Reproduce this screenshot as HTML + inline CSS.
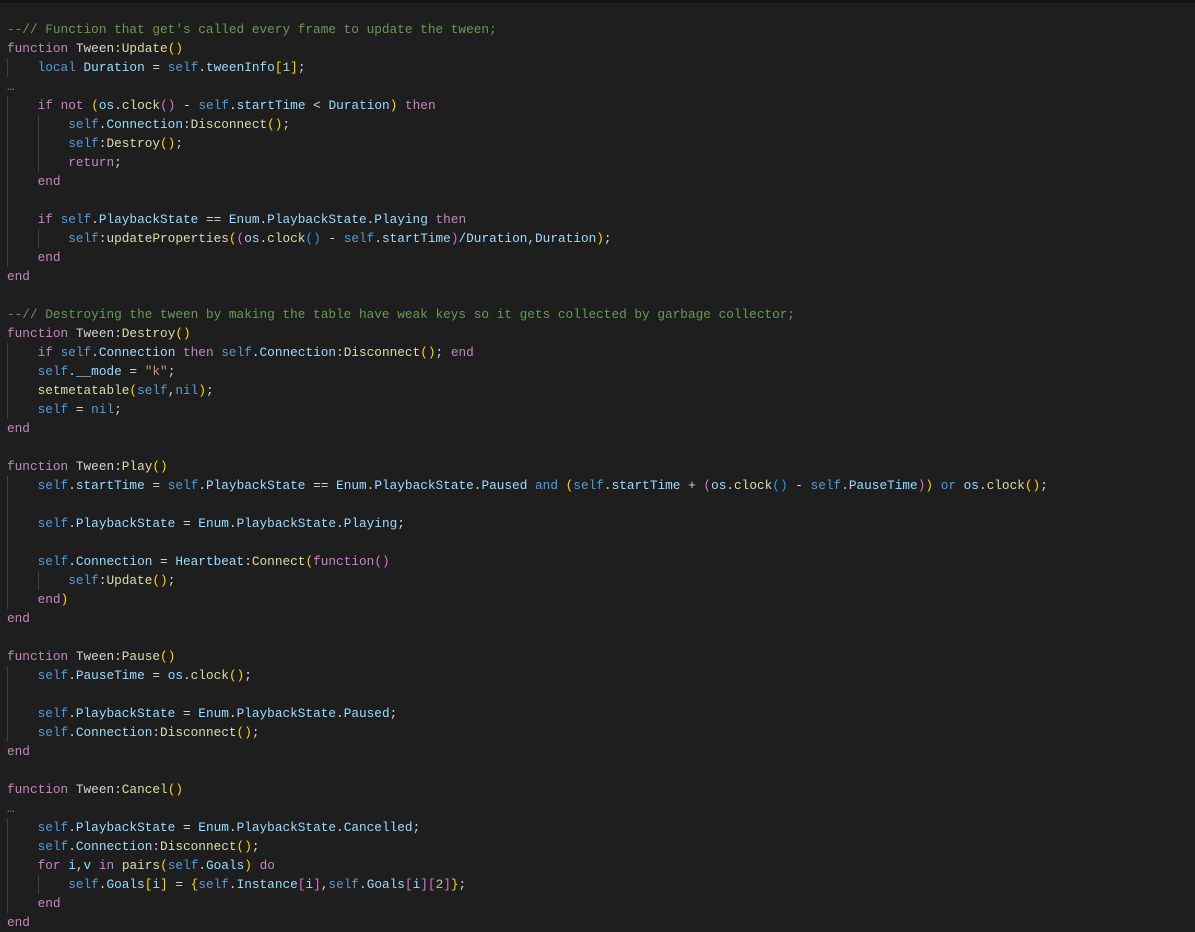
<!DOCTYPE html>
<html><head><meta charset="utf-8"><style>
html,body{margin:0;padding:0;background:#1e1e1e;width:1195px;height:928px;overflow:hidden}
.top{height:3px;background:#161616}
.code{margin:0;position:absolute;top:20px;left:7px;font-family:"Liberation Mono",monospace;font-size:12.75px;line-height:19px;color:#d4d4d4}
.l{height:19px;white-space:pre}
i{display:inline-block;width:4ch;height:19px;vertical-align:top;box-shadow:inset 1px 0 #404040;font-style:normal}
.c{color:#6a9955}.k{color:#c586c0}.b{color:#569cd6}.v{color:#9cdcfe}.f{color:#dcdcaa}.n{color:#b5cea8}.s{color:#ce9178}
.p1{color:#ffd700}.p2{color:#da70d6}.p3{color:#179fff}
.e{color:#888}
</style></head><body><div class="top"></div><div class="code">
<div class="l"><span class="c">--// Function that get's called every frame to update the tween;</span></div>
<div class="l"><span class="k">function</span> Tween:<span class="f">Update</span><span class="p1">()</span></div>
<div class="l"><i></i><span class="b">local</span> <span class="v">Duration</span> = <span class="b">self</span>.<span class="v">tweenInfo</span><span class="p1">[</span><span class="n">1</span><span class="p1">]</span>;</div>
<div class="l"><span class="e">…</span></div>
<div class="l"><i></i><span class="k">if</span> <span class="k">not</span> <span class="p1">(</span><span class="v">os</span>.<span class="f">clock</span><span class="p2">()</span> - <span class="b">self</span>.<span class="v">startTime</span> &lt; <span class="v">Duration</span><span class="p1">)</span> <span class="k">then</span></div>
<div class="l"><i></i><i></i><span class="b">self</span>.<span class="v">Connection</span>:<span class="f">Disconnect</span><span class="p1">()</span>;</div>
<div class="l"><i></i><i></i><span class="b">self</span>:<span class="f">Destroy</span><span class="p1">()</span>;</div>
<div class="l"><i></i><i></i><span class="k">return</span>;</div>
<div class="l"><i></i><span class="k">end</span></div>
<div class="l"><i></i></div>
<div class="l"><i></i><span class="k">if</span> <span class="b">self</span>.<span class="v">PlaybackState</span> == <span class="v">Enum</span>.<span class="v">PlaybackState</span>.<span class="v">Playing</span> <span class="k">then</span></div>
<div class="l"><i></i><i></i><span class="b">self</span>:<span class="f">updateProperties</span><span class="p1">(</span><span class="p2">(</span><span class="v">os</span>.<span class="f">clock</span><span class="p3">()</span> - <span class="b">self</span>.<span class="v">startTime</span><span class="p2">)</span>/<span class="v">Duration</span>,<span class="v">Duration</span><span class="p1">)</span>;</div>
<div class="l"><i></i><span class="k">end</span></div>
<div class="l"><span class="k">end</span></div>
<div class="l"></div>
<div class="l"><span class="c">--// Destroying the tween by making the table have weak keys so it gets collected by garbage collector;</span></div>
<div class="l"><span class="k">function</span> Tween:<span class="f">Destroy</span><span class="p1">()</span></div>
<div class="l"><i></i><span class="k">if</span> <span class="b">self</span>.<span class="v">Connection</span> <span class="k">then</span> <span class="b">self</span>.<span class="v">Connection</span>:<span class="f">Disconnect</span><span class="p1">()</span>; <span class="k">end</span></div>
<div class="l"><i></i><span class="b">self</span>.<span class="v">__mode</span> = <span class="s">"k"</span>;</div>
<div class="l"><i></i><span class="f">setmetatable</span><span class="p1">(</span><span class="b">self</span>,<span class="b">nil</span><span class="p1">)</span>;</div>
<div class="l"><i></i><span class="b">self</span> = <span class="b">nil</span>;</div>
<div class="l"><span class="k">end</span></div>
<div class="l"></div>
<div class="l"><span class="k">function</span> Tween:<span class="f">Play</span><span class="p1">()</span></div>
<div class="l"><i></i><span class="b">self</span>.<span class="v">startTime</span> = <span class="b">self</span>.<span class="v">PlaybackState</span> == <span class="v">Enum</span>.<span class="v">PlaybackState</span>.<span class="v">Paused</span> <span class="b">and</span> <span class="p1">(</span><span class="b">self</span>.<span class="v">startTime</span> + <span class="p2">(</span><span class="v">os</span>.<span class="f">clock</span><span class="p3">()</span> - <span class="b">self</span>.<span class="v">PauseTime</span><span class="p2">)</span><span class="p1">)</span> <span class="b">or</span> <span class="v">os</span>.<span class="f">clock</span><span class="p1">()</span>;</div>
<div class="l"><i></i></div>
<div class="l"><i></i><span class="b">self</span>.<span class="v">PlaybackState</span> = <span class="v">Enum</span>.<span class="v">PlaybackState</span>.<span class="v">Playing</span>;</div>
<div class="l"><i></i></div>
<div class="l"><i></i><span class="b">self</span>.<span class="v">Connection</span> = <span class="v">Heartbeat</span>:<span class="f">Connect</span><span class="p1">(</span><span class="k">function</span><span class="p2">()</span></div>
<div class="l"><i></i><i></i><span class="b">self</span>:<span class="f">Update</span><span class="p1">()</span>;</div>
<div class="l"><i></i><span class="k">end</span><span class="p1">)</span></div>
<div class="l"><span class="k">end</span></div>
<div class="l"></div>
<div class="l"><span class="k">function</span> Tween:<span class="f">Pause</span><span class="p1">()</span></div>
<div class="l"><i></i><span class="b">self</span>.<span class="v">PauseTime</span> = <span class="v">os</span>.<span class="f">clock</span><span class="p1">()</span>;</div>
<div class="l"><i></i></div>
<div class="l"><i></i><span class="b">self</span>.<span class="v">PlaybackState</span> = <span class="v">Enum</span>.<span class="v">PlaybackState</span>.<span class="v">Paused</span>;</div>
<div class="l"><i></i><span class="b">self</span>.<span class="v">Connection</span>:<span class="f">Disconnect</span><span class="p1">()</span>;</div>
<div class="l"><span class="k">end</span></div>
<div class="l"></div>
<div class="l"><span class="k">function</span> Tween:<span class="f">Cancel</span><span class="p1">()</span></div>
<div class="l"><span class="e">…</span></div>
<div class="l"><i></i><span class="b">self</span>.<span class="v">PlaybackState</span> = <span class="v">Enum</span>.<span class="v">PlaybackState</span>.<span class="v">Cancelled</span>;</div>
<div class="l"><i></i><span class="b">self</span>.<span class="v">Connection</span>:<span class="f">Disconnect</span><span class="p1">()</span>;</div>
<div class="l"><i></i><span class="k">for</span> <span class="v">i</span>,<span class="v">v</span> <span class="k">in</span> <span class="f">pairs</span><span class="p1">(</span><span class="b">self</span>.<span class="v">Goals</span><span class="p1">)</span> <span class="k">do</span></div>
<div class="l"><i></i><i></i><span class="b">self</span>.<span class="v">Goals</span><span class="p1">[</span><span class="v">i</span><span class="p1">]</span> = <span class="p1">{</span><span class="b">self</span>.<span class="v">Instance</span><span class="p2">[</span><span class="v">i</span><span class="p2">]</span>,<span class="b">self</span>.<span class="v">Goals</span><span class="p2">[</span><span class="v">i</span><span class="p2">][</span><span class="n">2</span><span class="p2">]</span><span class="p1">}</span>;</div>
<div class="l"><i></i><span class="k">end</span></div>
<div class="l"><span class="k">end</span></div>
</div></body></html>
